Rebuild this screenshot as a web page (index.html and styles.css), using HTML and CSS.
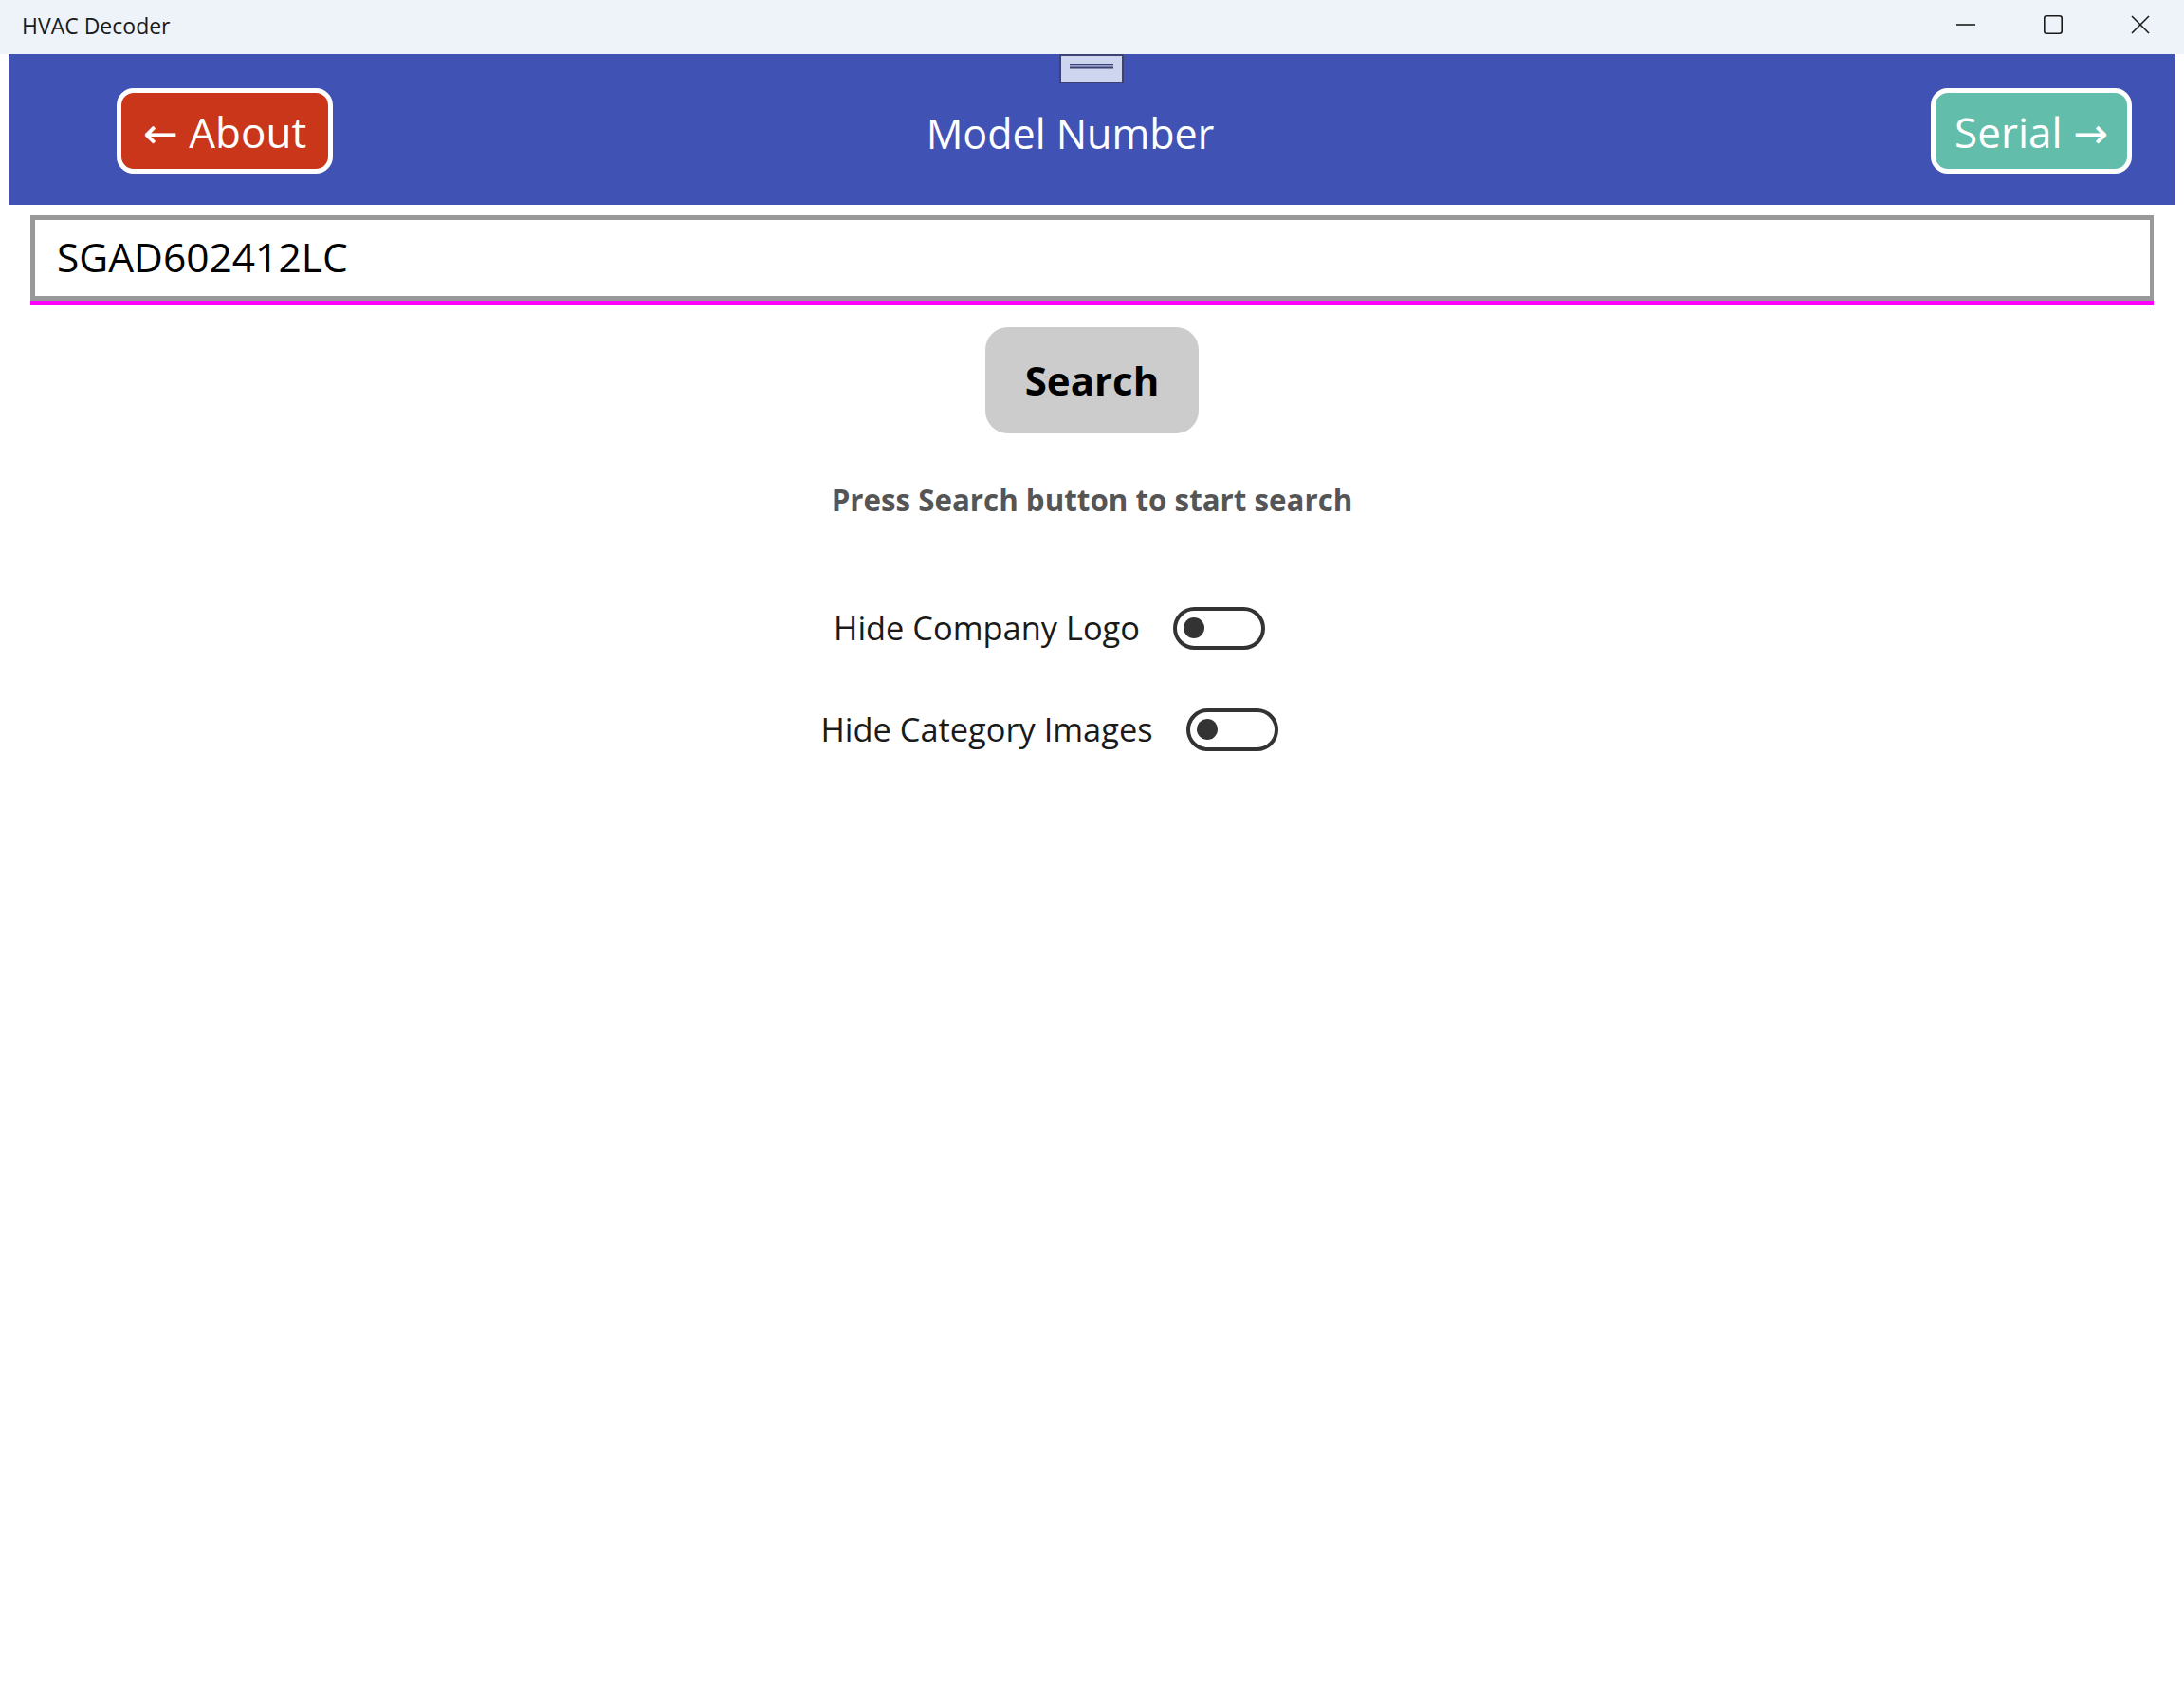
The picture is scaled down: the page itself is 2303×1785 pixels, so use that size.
FILE: index.html
```html
<!DOCTYPE html>
<html lang="en">
<head>
<meta charset="utf-8">
<title>HVAC Decoder</title>
<link rel="stylesheet" href="styles.css">
</head>
<body>
<div class="window">
  <div class="titlebar">
    <span class="title">HVAC Decoder</span>
    <div class="controls">
      <span class="ctl"><svg width="22" height="22" viewBox="0 0 22 22"><line x1="1" y1="11" x2="21" y2="11" stroke="#1b1b1b" stroke-width="1.6"/></svg></span>
      <span class="ctl"><svg width="22" height="22" viewBox="0 0 22 22"><rect x="1.8" y="1.8" width="18.4" height="18.4" rx="2.5" fill="none" stroke="#1b1b1b" stroke-width="1.6"/></svg></span>
      <span class="ctl"><svg width="22" height="22" viewBox="0 0 22 22"><path d="M2 2 L20 20 M20 2 L2 20" stroke="#1b1b1b" stroke-width="1.6" fill="none"/></svg></span>
    </div>
  </div>
  <div class="app">
    <header class="topbar">
      <button class="nav about">← About</button>
      <h1 class="heading">Model Number</h1>
      <button class="nav serial">Serial →</button>
      <div class="handle"><svg width="46" height="10" viewBox="0 0 46 10"><rect x="0" y="1" width="46" height="2" fill="#3c4272"/><rect x="0" y="3" width="46" height="1.5" fill="#9aa3d0"/><rect x="0" y="4.5" width="46" height="2" fill="#3c4272"/></svg></div>
    </header>
    <main class="content">
      <div class="field"><div class="field-box">SGAD602412LC</div></div>
      <button class="search">Search</button>
      <p class="hint">Press Search button to start search</p>
      <div class="toggles">
        <div class="toggle-row">
          <span class="toggle-label">Hide Company Logo</span>
          <span class="toggle"><span class="switch"><span class="knob"></span></span></span>
        </div>
        <div class="toggle-row">
          <span class="toggle-label">Hide Category Images</span>
          <span class="toggle"><span class="switch"><span class="knob"></span></span></span>
        </div>
      </div>
    </main>
  </div>
</div>
</body>
</html>
```

FILE: styles.css
```css
* { box-sizing: border-box; }
html, body { margin: 0; padding: 0; background: #ffffff; }
body {
  font-family: "Open Sans", "Noto Sans", "DejaVu Sans", sans-serif;
  width: 2303px;
  height: 1785px;
  overflow: hidden;
}
.window { width: 100%; height: 100%; display: flex; flex-direction: column; }

.titlebar {
  height: 57px;
  background: #eef2f9;
  display: flex;
  align-items: center;
  justify-content: space-between;
  padding-left: 23px;
  flex: none;
}
.title { font-size: 23px; color: #1a1a1a; line-height: 1; margin-top: -2px; }
.controls { display: flex; height: 100%; }
.ctl { width: 92px; height: 100%; display: flex; align-items: center; justify-content: center; padding-bottom: 6px; }

.app { flex: 1; padding: 0 10px 0 9px; display: flex; flex-direction: column; }

.topbar {
  position: relative;
  height: 159px;
  background: #4152b5;
  display: flex;
  align-items: center;
  padding: 2px 45px 0 114px;
  flex: none;
}
.nav {
  height: 90px;
  border: 5px solid #ffffff;
  border-radius: 18px;
  color: #ffffff;
  font-family: "Open Sans", "DejaVu Sans", sans-serif;
  font-size: 44px;
  line-height: 1;
  padding: 2px 0 0 0;
  display: flex;
  align-items: center;
  justify-content: center;
}
.about { width: 228px; background: #c9361a; }
.serial { width: 212px; background: #62bdab; }
.heading {
  flex: 1;
  margin: 0;
  padding: 6px 130px 0 0;
  text-align: center;
  font-weight: 400;
  font-size: 43px;
  color: #ffffff;
}
.handle {
  position: absolute;
  top: 0;
  left: 50%;
  transform: translateX(-50%);
  width: 68px;
  height: 31px;
  background: #cdd5ef;
  border: 2px solid #3c4272;
  display: flex;
  align-items: center;
  justify-content: center;
  padding-bottom: 4px;
}

.content {
  flex: 1;
  padding: 11px 22px 0 23px;
  display: flex;
  flex-direction: column;
  align-items: center;
}
.field { width: 100%; border-bottom: 5px solid #ff00ff; }
.field-box {
  height: 90px;
  border: 5px solid #999999;
  border-right-width: 4px;
  padding: 0 0 4px 23px;
  display: flex;
  align-items: center;
  font-size: 42.5px;
  color: #000000;
}

.search {
  margin-top: 23px;
  width: 225px;
  height: 112px;
  border: none;
  border-radius: 24px;
  background: #cccccc;
  font-family: "Open Sans", sans-serif;
  font-weight: 700;
  font-size: 42px;
  color: #000000;
  padding: 0 0 2px 0;
}
.hint {
  margin: 50px 0 0 0;
  font-size: 31.3px;
  line-height: 40px;
  font-weight: 700;
  color: #555555;
}

.toggles { margin-top: 92px; display: flex; flex-direction: column; gap: 61px; }
.toggle-row { display: flex; align-items: center; justify-content: center; gap: 35px; }
.toggle-label { font-size: 34.4px; color: #1a1a1a; line-height: 46px; }
.toggle { width: 187px; display: flex; }
.switch {
  width: 97px;
  height: 45px;
  border: 4px solid #333333;
  border-radius: 23px;
  display: flex;
  align-items: center;
  padding-left: 7px;
}
.knob { width: 22px; height: 22px; border-radius: 50%; background: #333333; }
```
